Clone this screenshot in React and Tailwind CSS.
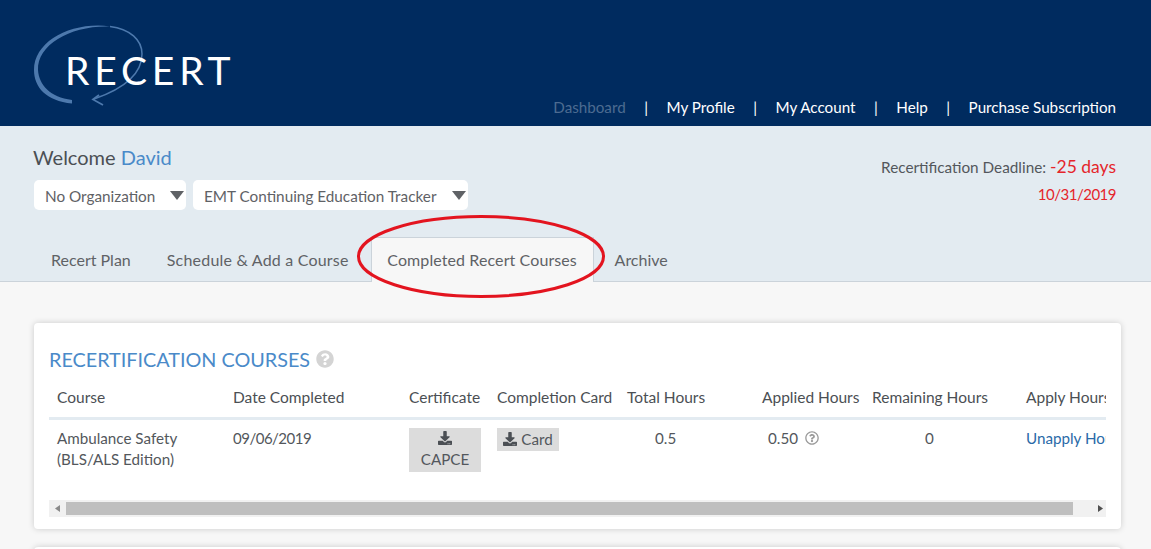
import React from "react";
import { FaDownload, FaQuestionCircle, FaRegQuestionCircle } from "react-icons/fa";

const navLinks = ["My Profile", "My Account", "Help", "Purchase Subscription"];
const columns = ["Course", "Date Completed", "Certificate", "Completion Card", "Total Hours", "Applied Hours", "Remaining Hours", "Apply Hours"];

function Logo() {
  return (
    <div className="relative w-[210px] h-[90px] mt-[24px] ml-[33px]">
      <svg className="absolute left-0 top-0" width="210" height="90" viewBox="33 24 210 90" fill="none">
        {/* tapered swoosh, thick on the left and thin at the top */}
        <path d="M72 103.5C46 101 34 87 34 70C34 44 64 25.5 98 25.5C102 25.5 106 26 110 26.5C72 25 37 44 38 70C39 85 50 97 72 100Z" fill="#4d79ad" />
        <path d="M110 26.5C130 29 142 40 142 54C142 76 120 90 94 99" stroke="#4d79ad" strokeWidth="1.5" />
        <path d="M99 95L93 99.5L103 105" stroke="#4d79ad" strokeWidth="1.8" />
      </svg>
      <span className="absolute left-[32px] top-[21px] text-[39px] leading-[50px] tracking-[4.8px] text-white font-normal">RECERT</span>
    </div>
  );
}

function Select({ label, className }) {
  return (
    <div className={`h-[30px] bg-white rounded-[5px] pl-[11px] pt-[3px] flex items-center justify-between text-[15.3px] text-[#5f6266] ${className}`}>
      <span>{label}</span>
      <svg className="mr-[2px] mb-[3px]" width="14" height="9" viewBox="0 0 14 9">
        <path d="M0 0H14L7 9Z" fill="#5f6266" />
      </svg>
    </div>
  );
}

export default function App() {
  return (
    <div className="relative h-[549px] overflow-hidden bg-[#f7f7f7] font-['Lato',sans-serif] text-[#53575c]">
      {/* header */}
      <div className="h-[126px] bg-[#002b5f] flex justify-between items-start">
        <Logo />
        <div className="flex items-center mt-[96px] mr-[35px] text-[15.2px] leading-[22px] text-white">
          <span className="text-[#4d6b91]">Dashboard</span>
          {navLinks.map((link) => (
            <React.Fragment key={link}>
              <span className="mx-[18.5px]">|</span>
              <span>{link}</span>
            </React.Fragment>
          ))}
        </div>
      </div>

      {/* welcome band */}
      <div className="h-[156px] bg-[#e3ebf1] border-b border-[#cbd3da] flex flex-col justify-between">
        <div className="flex justify-between px-[35px]">
          <div className="ml-[-1px]">
            <div className="mt-[18px] ml-[-1px] text-[20px] leading-[26px] text-[#4b4f54]">
              Welcome <span className="text-[#4a8ac9]">David</span>
            </div>
            <div className="flex gap-[7px] mt-[10px]">
              <Select label="No Organization" className="w-[152px]" />
              <Select label="EMT Continuing Education Tracker" className="w-[275px]" />
            </div>
          </div>
          <div className="mt-[29px] text-right">
            <div className="text-[15.3px] leading-[24px]">
              Recertification Deadline: <span className="text-[17.5px] text-[#e5252b]">-25 days</span>
            </div>
            <div className="mt-[4px] text-[15px] tracking-[-0.5px] leading-[22px] text-[#e5252b]">10/31/2019</div>
          </div>
        </div>
        <div className="flex items-end pl-[34px] text-[16px] text-[#5f6266] mb-[-1px]">
          <div className="h-[45px] pl-[17px] pr-[17px] flex items-center">Recert Plan</div>
          <div className="h-[45px] px-[19px] flex items-center tracking-[0.2px]">Schedule &amp; Add a Course</div>
          <div className="h-[45px] w-[223px] ml-[3px] bg-[#f7f7f7] border border-b-0 border-[#cbd3da] flex items-center justify-center tracking-[0.1px]">Completed Recert Courses</div>
          <div className="h-[45px] pl-[21px] flex items-center">Archive</div>
        </div>
      </div>

      {/* course card */}
      <div className="ml-[34px] mr-[30px] mt-[41px] h-[206px] bg-white rounded-[4px] shadow-[0_0_6px_rgba(0,0,0,0.18)] pt-[24px] px-[15px]">
        <div className="flex items-center gap-[6px] text-[19.8px] leading-[24px] text-[#4a8ac9]">
          RECERTIFICATION COURSES
          <FaQuestionCircle className="text-[#d4d4d4] text-[18px]" />
        </div>
        <div className="overflow-hidden">
          <div className="w-[1200px] grid grid-cols-[176px_176px_88px_130px_135px_110px_154px_231px] text-[15.2px]">
            {columns.map((col) => (
              <div key={col} className="h-[42px] mt-[7px] pl-[8px] flex items-center text-[15.5px] text-[#4b4f54] border-b-[3px] border-[#e3ebf1] whitespace-nowrap">
                {col}
              </div>
            ))}
            <div className="pl-[8px] pt-[8px] leading-[21px]">Ambulance Safety<br />(BLS/ALS Edition)</div>
            <div className="pl-[8px] pt-[8px] leading-[21px] text-[15px] tracking-[-0.5px]">09/06/2019</div>
            <div className="pl-[8px] pt-[8px]">
              <div className="w-[72px] h-[44px] bg-[#dcdcdc] flex flex-col items-center pt-[1px] leading-[22px]">
                <FaDownload className="text-[14px] mt-[2px] text-[#4b4f54]" />
                <span className="mt-[3px]">CAPCE</span>
              </div>
            </div>
            <div className="pl-[8px] pt-[8px]">
              <div className="w-[62px] h-[23px] pb-[1px] bg-[#dcdcdc] flex items-center justify-center gap-[4px]">
                <FaDownload className="text-[14px] text-[#4b4f54]" />
                Card
              </div>
            </div>
            <div className="pt-[8px] pl-[36px] leading-[21px]">0.5</div>
            <div className="pt-[8px] pl-[14px] leading-[21px] flex items-start gap-[7px]">
              0.50
              <FaRegQuestionCircle className="text-[14px] text-[#9a9a9a] mt-[3px]" />
            </div>
            <div className="pt-[8px] pl-[61px] leading-[21px]">0</div>
            <div className="pl-[8px] pt-[8px] leading-[21px] text-[#2a6aa8] whitespace-nowrap">Unapply Hours</div>
          </div>
        </div>
        {/* scrollbar */}
        <div className="mt-[28px] h-[17px] bg-[#f1f1f1] flex items-center">
          <svg className="mx-[6px]" width="5" height="7" viewBox="0 0 5 7"><path d="M5 0V7L0 3.5Z" fill="#8a8a8a" /></svg>
          <div className="w-[1007px] h-[13px] bg-[#bfbfbf]" />
          <svg className="ml-[25px]" width="5" height="7" viewBox="0 0 5 7"><path d="M0 0V7L5 3.5Z" fill="#505050" /></svg>
        </div>
      </div>

      {/* next card, cut off by the window */}
      <div className="ml-[34px] mr-[30px] mt-[18px] h-[40px] bg-white rounded-[4px] shadow-[0_0_6px_rgba(0,0,0,0.18)]" />

      {/* red hand drawn ellipse */}
      <svg className="absolute left-0 top-0 pointer-events-none" width="1151" height="549" fill="none">
        <ellipse cx="481" cy="256.5" rx="122.5" ry="40" stroke="#e3141f" strokeWidth="3" />
      </svg>
    </div>
  );
}
